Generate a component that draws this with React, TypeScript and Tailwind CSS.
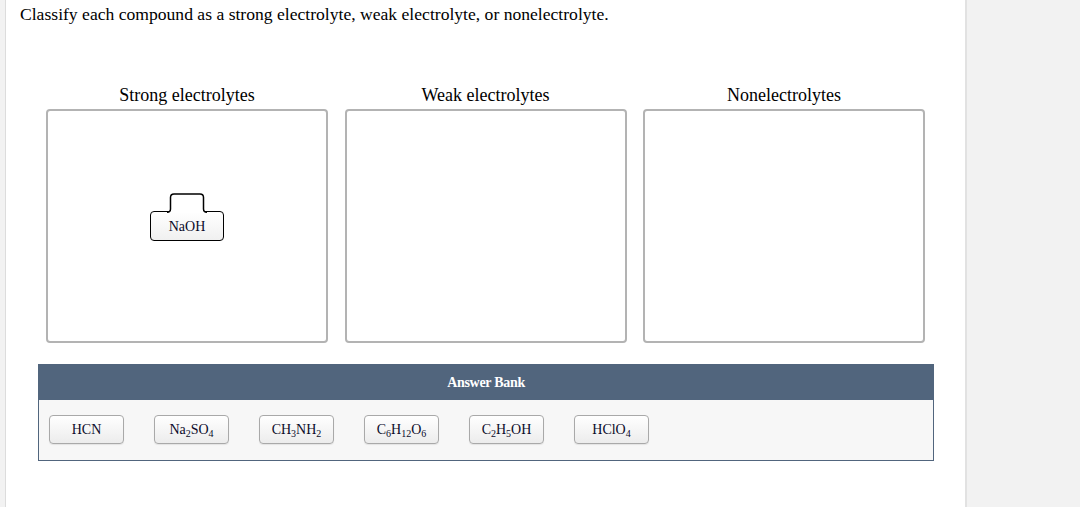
import React from "react";

type Compound = { key: string; parts: [string, string?][] };

// each part is [text, subscript]
const bank: Compound[] = [
  { key: "hcn", parts: [["HCN"]] },
  { key: "na2so4", parts: [["Na", "2"], ["SO", "4"]] },
  { key: "ch3nh2", parts: [["CH", "3"], ["NH", "2"]] },
  { key: "c6h12o6", parts: [["C", "6"], ["H", "12"], ["O", "6"]] },
  { key: "c2h5oh", parts: [["C", "2"], ["H", "5"], ["OH"]] },
  { key: "hclo4", parts: [["HClO", "4"]] },
];

const bins = ["Strong electrolytes", "Weak electrolytes", "Nonelectrolytes"];

const Formula = ({ parts }: { parts: [string, string?][] }) => (
  <span className="whitespace-nowrap">
    {parts.map(([t, s], i) => (
      <React.Fragment key={i}>
        {t}
        {s && <sub className="text-[10px] -bottom-[3px]">{s}</sub>}
      </React.Fragment>
    ))}
  </span>
);

const Chip = ({ c }: { c: Compound }) => (
  <div className="w-[75px] h-[29px] flex items-center justify-center rounded-[4px] border border-[#a9a9a9] bg-gradient-to-b from-white to-[#ececec] text-[14px] text-[#0b0b2a] shadow-[0_1px_1px_rgba(0,0,0,0.08)]">
    <Formula parts={c.parts} />
  </div>
);

// chip sitting in a bin, with the drag tab on top
const PlacedChip = ({ label }: { label: string }) => (
  <div className="relative w-[74px] h-[30px] flex items-center justify-center rounded-[4px] border-[1.5px] border-black bg-gradient-to-b from-white to-[#f0f0f0] text-[14px] text-[#0b0b2a]">
    <svg
      width="40"
      height="20"
      viewBox="0 0 40 20"
      className="absolute left-[16px] -top-[19px]"
    >
      <path
        d="M0 19.5 Q3.5 19.5 3.5 16 V4.5 Q3.5 1 7 1 H33 Q36.5 1 36.5 4.5 V16 Q36.5 19.5 40 19.5 V21 H0 Z"
        fill="white"
        stroke="none"
      />
      <path
        d="M0 19.25 Q3.5 19.25 3.5 16 V4.5 Q3.5 1 7 1 H33 Q36.5 1 36.5 4.5 V16 Q36.5 19.25 40 19.25"
        fill="none"
        stroke="black"
        strokeWidth="1.5"
      />
    </svg>
    {label}
  </div>
);

export default function App() {
  return (
    <div className="w-[1080px] h-[507px] flex bg-[#f2f2f2] overflow-hidden font-['Liberation_Serif','Times_New_Roman',serif]">
      <div className="w-[6px] border-r border-[#dcdcdc]" />
      <div className="w-[961px] bg-white border-r-2 border-[#e2e2e2] pt-[4px]">
        <p className="pl-[14px] text-[17.6px] leading-[20px] text-black">
          Classify each compound as a strong electrolyte, weak electrolyte, or nonelectrolyte.
        </p>

        <div className="ml-[32px] w-[896px] mt-[61px]">
          <div className="px-[8px] grid grid-cols-[282px_282px_282px] gap-x-[16.5px]">
            {bins.map((b, i) => (
              <div key={b} className="flex flex-col">
                <div className="text-center text-[18px] leading-[20px] text-black mb-[4px]">
                  {b}
                </div>
                <div className="h-[234px] rounded-[4px] border-2 border-[#b3b3b3] flex items-center justify-center">
                  {i === 0 && <PlacedChip label="NaOH" />}
                </div>
              </div>
            ))}
          </div>

          <div className="mt-[21px] border border-[#51657d]">
            <div className="h-[35px] bg-[#51657d] flex items-center justify-center text-white font-bold text-[14px] tracking-[-0.3px]">
              Answer Bank
            </div>
            <div className="h-[60px] bg-[#f7f7f7] flex items-center gap-[30px] pl-[10px] pb-[2px]">
              {bank.map((c) => (
                <Chip key={c.key} c={c} />
              ))}
            </div>
          </div>
        </div>
      </div>
      <div className="flex-1" />
    </div>
  );
}
